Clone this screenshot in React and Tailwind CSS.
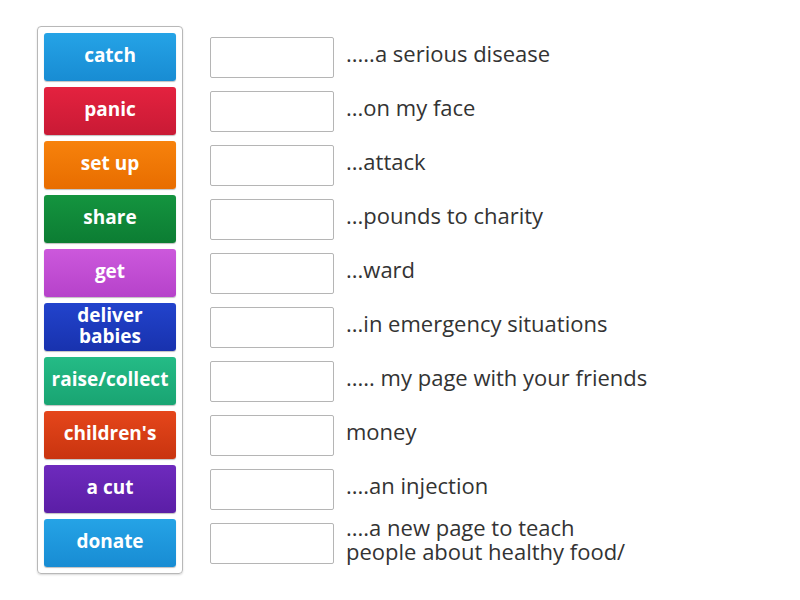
const items = [
  { label: "catch", cls: "from-[#25a3e6] to-[#188cd3]" },
  { label: "panic", cls: "from-[#e4223f] to-[#c91a35]" },
  { label: "set up", cls: "from-[#f7820c] to-[#e86d00]" },
  { label: "share", cls: "from-[#14943f] to-[#0c7d33]" },
  { label: "get", cls: "from-[#cc58dc] to-[#b642ca]" },
  { label: "deliver babies", cls: "from-[#2243cc] to-[#1832ae]" },
  { label: "raise/collect", cls: "from-[#24bb86] to-[#19a472]" },
  { label: "children's", cls: "from-[#e5461b] to-[#c9340f]" },
  { label: "a cut", cls: "from-[#6e2abd] to-[#5b1ea6]" },
  { label: "donate", cls: "from-[#25a3e6] to-[#188cd3]" },
];

const prompts = [
  ".....a serious disease",
  "...on my face",
  "...attack",
  "...pounds to charity",
  "...ward",
  "...in emergency situations",
  "..... my page with your friends",
  "money",
  "....an injection",
  "....a new page to teach\npeople about healthy food/",
];

export default function App() {
  return (
    <div
      className="w-[800px] h-[600px] bg-white flex items-start pt-[26px] pl-[37px]"
      style={{ fontFamily: '"Open Sans", "Liberation Sans", sans-serif' }}
    >
      {/* Word bank */}
      <div className="w-[146px] border border-[#b8b8b8] rounded-[4px] p-[6px] flex flex-col gap-[6px] shadow-[0_1px_2px_rgba(0,0,0,0.15)]">
        {items.map((it) => (
          <div
            key={it.label}
            className={`h-[48px] rounded-[3px] bg-gradient-to-b ${it.cls} flex items-center justify-center text-center text-white font-bold text-[19px] leading-[21px] px-1 pb-[3px] shadow-[0_1px_1px_rgba(0,0,0,0.25)]`}
          >
            {it.label}
          </div>
        ))}
      </div>

      {/* Targets */}
      <div className="ml-[27px] pt-[7px] flex flex-col gap-[6px]">
        {prompts.map((p) => (
          <div key={p} className="h-[48px] flex items-center">
            <div className="w-[124px] h-[41px] border border-[#b5b5b5] rounded-[2px] bg-white shrink-0" />
            <div className="ml-[12px] w-[330px] whitespace-pre-line text-[22px] leading-[24px] text-[#333] -mt-[8px]">
              {p}
            </div>
          </div>
        ))}
      </div>
    </div>
  );
}
